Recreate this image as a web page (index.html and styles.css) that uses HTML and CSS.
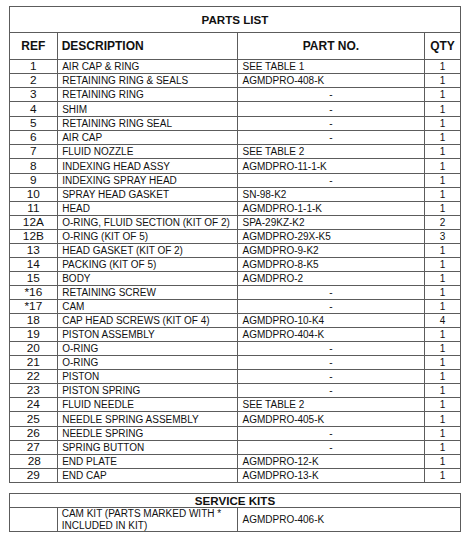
FILE: index.html
```html
<!DOCTYPE html>
<html>
<head>
<meta charset="utf-8">
<link rel="stylesheet" href="styles.css">
</head>
<body>
<table class="parts">
  <colgroup><col class="c-ref"><col class="c-desc"><col class="c-part"><col class="c-qty"></colgroup>
  <thead>
    <tr class="title"><th colspan="4">PARTS LIST</th></tr>
    <tr class="head"><th>REF</th><th class="left">DESCRIPTION</th><th>PART NO.</th><th>QTY</th></tr>
  </thead>
  <tbody>
    <tr><td class="ref">1</td><td>AIR CAP &amp; RING</td><td>SEE TABLE 1</td><td class="qty">1</td></tr>
    <tr><td class="ref">2</td><td>RETAINING RING &amp; SEALS</td><td>AGMDPRO-408-K</td><td class="qty">1</td></tr>
    <tr><td class="ref">3</td><td>RETAINING RING</td><td class="dash">-</td><td class="qty">1</td></tr>
    <tr class="tall"><td class="ref">4</td><td>SHIM</td><td class="dash">-</td><td class="qty">1</td></tr>
    <tr><td class="ref">5</td><td>RETAINING RING SEAL</td><td class="dash">-</td><td class="qty">1</td></tr>
    <tr><td class="ref">6</td><td>AIR CAP</td><td class="dash">-</td><td class="qty">1</td></tr>
    <tr><td class="ref">7</td><td>FLUID NOZZLE</td><td>SEE TABLE 2</td><td class="qty">1</td></tr>
    <tr class="tall"><td class="ref">8</td><td>INDEXING HEAD ASSY</td><td>AGMDPRO-11-1-K</td><td class="qty">1</td></tr>
    <tr><td class="ref">9</td><td>INDEXING SPRAY HEAD</td><td class="dash">-</td><td class="qty">1</td></tr>
    <tr><td class="ref">10</td><td>SPRAY HEAD GASKET</td><td>SN-98-K2</td><td class="qty">1</td></tr>
    <tr><td class="ref">11</td><td>HEAD</td><td>AGMDPRO-1-1-K</td><td class="qty">1</td></tr>
    <tr><td class="ref">12A</td><td>O-RING, FLUID SECTION (KIT OF 2)</td><td>SPA-29KZ-K2</td><td class="qty">2</td></tr>
    <tr><td class="ref">12B</td><td>O-RING (KIT OF 5)</td><td>AGMDPRO-29X-K5</td><td class="qty">3</td></tr>
    <tr><td class="ref">13</td><td>HEAD GASKET (KIT OF 2)</td><td>AGMDPRO-9-K2</td><td class="qty">1</td></tr>
    <tr><td class="ref">14</td><td>PACKING (KIT OF 5)</td><td>AGMDPRO-8-K5</td><td class="qty">1</td></tr>
    <tr><td class="ref">15</td><td>BODY</td><td>AGMDPRO-2</td><td class="qty">1</td></tr>
    <tr><td class="ref">*16</td><td>RETAINING SCREW</td><td class="dash">-</td><td class="qty">1</td></tr>
    <tr><td class="ref">*17</td><td>CAM</td><td class="dash">-</td><td class="qty">1</td></tr>
    <tr><td class="ref">18</td><td>CAP HEAD SCREWS (KIT OF 4)</td><td>AGMDPRO-10-K4</td><td class="qty">4</td></tr>
    <tr><td class="ref">19</td><td>PISTON ASSEMBLY</td><td>AGMDPRO-404-K</td><td class="qty">1</td></tr>
    <tr><td class="ref">20</td><td>O-RING</td><td class="dash">-</td><td class="qty">1</td></tr>
    <tr><td class="ref">21</td><td>O-RING</td><td class="dash">-</td><td class="qty">1</td></tr>
    <tr><td class="ref">22</td><td>PISTON</td><td class="dash">-</td><td class="qty">1</td></tr>
    <tr><td class="ref">23</td><td>PISTON SPRING</td><td class="dash">-</td><td class="qty">1</td></tr>
    <tr><td class="ref">24</td><td>FLUID NEEDLE</td><td>SEE TABLE 2</td><td class="qty">1</td></tr>
    <tr class="tall"><td class="ref">25</td><td>NEEDLE SPRING ASSEMBLY</td><td>AGMDPRO-405-K</td><td class="qty">1</td></tr>
    <tr><td class="ref">26</td><td>NEEDLE SPRING</td><td class="dash">-</td><td class="qty">1</td></tr>
    <tr><td class="ref">27</td><td>SPRING BUTTON</td><td class="dash">-</td><td class="qty">1</td></tr>
    <tr><td class="ref ref-shift">28</td><td>END PLATE</td><td>AGMDPRO-12-K</td><td class="qty">1</td></tr>
    <tr><td class="ref">29</td><td>END CAP</td><td>AGMDPRO-13-K</td><td class="qty">1</td></tr>
  </tbody>
</table>

<table class="kits">
  <colgroup><col class="c-ref"><col class="c-desc"><col class="c-kpart"></colgroup>
  <thead>
    <tr class="ktitle"><th colspan="3">SERVICE KITS</th></tr>
  </thead>
  <tbody>
    <tr class="krow"><td></td><td class="kdesc">CAM KIT (PARTS MARKED WITH *<br>INCLUDED IN KIT)</td><td>AGMDPRO-406-K</td></tr>
  </tbody>
</table>
</body>
</html>
```

FILE: styles.css
```css
html, body {
  margin: 0;
  padding: 0;
  background: #ffffff;
}
body {
  padding: 6px 0 0 9px;
  font-family: "Liberation Sans", Arial, sans-serif;
  color: #111111;
}
table {
  border-collapse: collapse;
  table-layout: fixed;
  width: 451px;
}
th, td {
  border: 1px solid #5c5c5c;
  padding: 0;
  overflow: hidden;
  white-space: nowrap;
  vertical-align: middle;
}
.c-ref { width: 47.7px; }
.c-desc { width: 180.3px; }
.c-part { width: 187px; }
.c-qty { width: 36px; }
.c-kpart { width: 223px; }

.title th {
  height: 25px;
  font-size: 11.6px;
  font-weight: bold;
  text-align: center;
  line-height: 12px;
}
.head th {
  height: 26px;
  font-size: 12px;
  font-weight: bold;
  text-align: center;
  line-height: 12px;
}
.head th.left {
  text-align: left;
  padding-left: 4px;
}
.parts tbody td {
  height: 13px;
  font-size: 10px;
  line-height: 11px;
  padding-left: 4.5px;
}
.parts tbody tr.tall td {
  height: 14px;
}
.parts tbody td.ref {
  font-size: 11.8px;
  text-align: center;
  padding-left: 0;
}
.parts tbody td.ref-shift {
  padding-left: 2px;
}
.parts tbody td.dash {
  text-align: center;
  padding-left: 0;
}
.parts tbody td.qty {
  text-align: center;
  padding-left: 0;
}

.kits {
  margin-top: 10px;
}
.ktitle th {
  height: 13px;
  font-size: 11.6px;
  font-weight: bold;
  text-align: center;
  line-height: 12px;
}
.krow td {
  height: 22px;
  font-size: 10px;
  line-height: 11.5px;
  padding-left: 4.5px;
}
.krow td.kdesc {
  padding-left: 4px;
}
```
